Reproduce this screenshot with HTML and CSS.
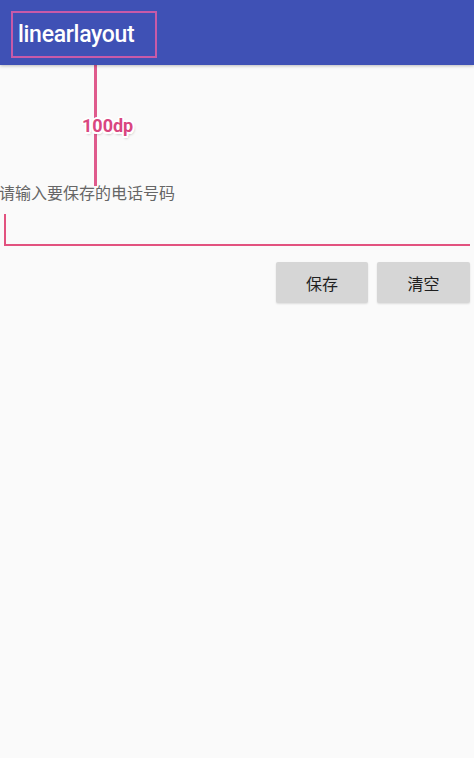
FILE: index.html
```html
<!DOCTYPE html>
<html lang="zh">
<head>
<meta charset="utf-8">
<title>linearlayout</title>
<link rel="stylesheet" href="styles.css">
</head>
<body>
  <header class="appbar">
    <div class="title-box"><span class="title">linearlayout</span></div>
  </header>
  <main class="content">
    <div class="margin-spacer">
      <div class="margin-line"></div>
      <span class="margin-label">100dp</span>
    </div>
    <div class="hint">请输入要保存的电话号码</div>
    <div class="edit"><span class="cursor"></span></div>
    <div class="actions">
      <button class="btn btn-save">保存</button>
      <button class="btn btn-clear">清空</button>
    </div>
  </main>
</body>
</html>
```

FILE: styles.css
```css
* { box-sizing: border-box; }
html, body { margin: 0; padding: 0; }
body {
  width: 474px;
  height: 758px;
  background: #fafafa;
  font-family: Roboto, "Noto Sans CJK SC", sans-serif;
  overflow: hidden;
}
.appbar {
  height: 65px;
  background: #3f51b5;
  padding: 11px;
  box-shadow: 0 1px 3px rgba(0,0,0,0.25);
  position: relative;
  z-index: 1;
}
.title-box {
  width: 146px;
  height: 47px;
  border: 2px solid #c85aa8;
  padding-left: 5px;
}
.title {
  display: block;
  color: #ffffff;
  font-family: Roboto, sans-serif;
  font-size: 23px;
  line-height: 43px;
  font-weight: 500;
  letter-spacing: -0.3px;
}
.content { display: flex; flex-direction: column; }
.margin-spacer {
  height: 118px;
  position: relative;
}
.margin-line {
  width: 3px;
  height: 121px;
  margin-left: 94px;
  background: #df5a8c;
}
.margin-label {
  position: absolute;
  left: 82px;
  top: 51px;
  font-family: Roboto, sans-serif;
  font-weight: 700;
  font-size: 18px;
  line-height: 20px;
  color: #d9467f;
  text-shadow:
    -1.5px -1.5px 0 #fff, 1.5px -1.5px 0 #fff, -1.5px 1.5px 0 #fff, 1.5px 1.5px 0 #fff,
    0 -2px 0 #fff, 0 2px 0 #fff, -2px 0 0 #fff, 2px 0 0 #fff,
    1px 2px 3px rgba(0,0,0,0.4);
}
.hint {
  font-family: "Noto Sans CJK SC", sans-serif;
  font-size: 16px;
  line-height: 18px;
  color: #666666;
  margin-left: -1px;
}
.edit {
  margin: 0 4px;
  padding-top: 13px;
  border-bottom: 2px solid #e2527f;
  display: flex;
}
.cursor {
  display: block;
  width: 2px;
  height: 30px;
  background: #e2527f;
}
.actions {
  display: flex;
  justify-content: flex-end;
  gap: 9px;
  margin-top: 16px;
  padding-right: 4px;
}
.btn {
  height: 41px;
  border: none;
  border-radius: 2px;
  background: #d6d6d6;
  color: #1f1f1f;
  font-family: "Noto Sans CJK SC", sans-serif;
  font-size: 16px;
  padding: 0;
  box-shadow: 0 1px 2px rgba(0,0,0,0.12);
}
.btn-save { width: 92px; }
.btn-clear { width: 93px; }
```
